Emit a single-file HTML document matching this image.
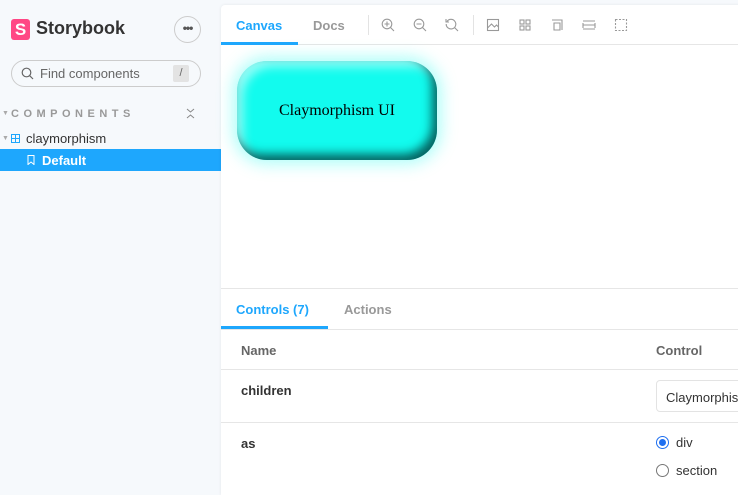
<!DOCTYPE html>
<html><head><style>
*{box-sizing:border-box;margin:0;padding:0}
body{width:738px;height:483px;overflow:hidden;background:#f6f9fc;font-family:"Liberation Sans",sans-serif;position:relative}
.abs{position:absolute}
.main{left:221px;top:5px;width:530px;height:490px;background:#fff;border-radius:4px 0 0 0;box-shadow:0 0 3px rgba(0,0,0,.08)}
.tb{height:40px;border-bottom:1px solid #e6e6e6;position:relative}
.tab{position:absolute;font-size:13px;font-weight:bold;top:13px}
.ic{position:absolute;top:13px;width:14px;height:14px}
.hr{position:absolute;left:0;width:530px;height:1px;background:#e6e6e6}
</style></head><body>
<div class="abs" style="left:11px;top:19px;width:19px;height:21px;background:#ff4785;border-radius:3px;color:#fff;font-weight:bold;font-size:17px;text-align:center;line-height:21px">S</div>
<div class="abs" style="left:36px;top:18px;font-size:18px;font-weight:bold;color:#333">Storybook</div>
<div class="abs" style="left:174px;top:16px;width:27px;height:27px;border:1px solid #ccc;border-radius:50%;text-align:center;line-height:22px;font-size:12px;font-weight:bold;color:#555;letter-spacing:-1px">•••</div>
<div class="abs" style="left:11px;top:60px;width:190px;height:27px;border:1px solid #ccc;border-radius:14px;background:#f6f9fc"></div>
<svg class="abs" style="left:21px;top:67px" width="13" height="13" viewBox="0 0 13 13"><circle cx="5.5" cy="5.5" r="4.3" fill="none" stroke="#666" stroke-width="1.2"/><path d="M8.7 8.7L12 12" stroke="#666" stroke-width="1.2"/></svg>
<div class="abs" style="left:40px;top:66px;font-size:13px;color:#666">Find components</div>
<div class="abs" style="left:173px;top:65px;width:16px;height:17px;background:#e3e3e3;border-radius:2px;font-size:11px;color:#666;text-align:center;line-height:17px">/</div>
<div class="abs" style="left:2px;top:110px;font-size:7px;color:#aaa">▼</div>
<div class="abs" style="left:11px;top:108px;font-size:11px;font-weight:bold;color:#999;letter-spacing:4.5px">COMPONENTS</div>
<svg class="abs" style="left:186px;top:108px" width="9" height="11" viewBox="0 0 9 11" fill="none" stroke="#888" stroke-width="1"><path d="M1 1l3.5 3 3.5-3M1 10l3.5-3 3.5 3"/></svg>
<div class="abs" style="left:2px;top:135px;font-size:7px;color:#aaa">▼</div>
<svg class="abs" style="left:11px;top:134px" width="9" height="9" viewBox="0 0 9 9"><rect x=".5" y=".5" width="8" height="8" fill="none" stroke="#1ea7fd"/><path d="M4.5 0V9M0 4.5H9" stroke="#1ea7fd"/></svg>
<div class="abs" style="left:26px;top:131px;font-size:13px;color:#333">claymorphism</div>
<div class="abs" style="left:0;top:149px;width:221px;height:22px;background:#1ea7fd"></div>
<svg class="abs" style="left:27px;top:155px" width="8" height="10" viewBox="0 0 8 10"><path d="M1 .5H7V9.5L4 7 1 9.5Z" fill="none" stroke="#fff"/></svg>
<div class="abs" style="left:42px;top:153px;font-size:13px;font-weight:bold;color:#fff">Default</div>
<div class="abs main">
 <div class="tb">
  <div class="tab" style="left:15px;color:#1ea7fd">Canvas</div>
  <div class="abs" style="left:0;top:37px;width:77px;height:3px;background:#1ea7fd"></div>
  <div class="tab" style="left:92px;color:#999">Docs</div>
  <div class="abs" style="left:147px;top:10px;width:1px;height:20px;background:#e3e3e3"></div>
  <div class="abs" style="left:252px;top:10px;width:1px;height:20px;background:#e3e3e3"></div>
  <svg class="ic" style="left:160px" viewBox="0 0 14 14" fill="none" stroke="#999" stroke-width="1.1"><circle cx="6" cy="6" r="4.8"/><path d="M9.5 9.5L13 13M3.5 6h5M6 3.5v5"/></svg>
  <svg class="ic" style="left:192px" viewBox="0 0 14 14" fill="none" stroke="#999" stroke-width="1.1"><circle cx="6" cy="6" r="4.8"/><path d="M9.5 9.5L13 13M3.5 6h5"/></svg>
  <svg class="ic" style="left:224px" viewBox="0 0 14 14" fill="none" stroke="#999" stroke-width="1.1"><path d="M2 3.5A4.8 4.8 0 1 1 1.2 6"/><path d="M9.5 9.5L13 13M1 1v3h3"/></svg>
  <svg class="ic" style="left:265px" viewBox="0 0 14 14" fill="none" stroke="#999" stroke-width="1.1"><rect x="1.5" y="1.5" width="11" height="11"/><path d="M1.5 10l4-4 3 3 2-2 2 2"/></svg>
  <svg class="ic" style="left:297px" viewBox="0 0 14 14" fill="none" stroke="#999" stroke-width="1.1"><rect x="2" y="2" width="4" height="4"/><rect x="8" y="2" width="4" height="4"/><rect x="2" y="8" width="4" height="4"/><rect x="8" y="8" width="4" height="4"/></svg>
  <svg class="ic" style="left:329px" viewBox="0 0 14 14" fill="none" stroke="#999" stroke-width="1.1"><path d="M2 2h10v10M4 5h6v7H4z"/></svg>
  <svg class="ic" style="left:361px" viewBox="0 0 14 14" fill="none" stroke="#999" stroke-width="1.1"><path d="M1 3h12M1 5v5M13 5v5M1 7h12M1 11h12"/></svg>
  <svg class="ic" style="left:393px" viewBox="0 0 14 14" fill="none" stroke="#999" stroke-width="1.1" stroke-dasharray="2 1.5"><rect x="1.5" y="1.5" width="11" height="11"/></svg>
 </div>
 <div class="abs" style="left:16px;top:56px;width:200px;height:99px;border-radius:30px;background:#12fbee;box-shadow:inset -5px -6px 10px rgba(0,60,60,.8),inset 6px 6px 10px rgba(255,255,255,.55),0 0 16px 4px rgba(18,251,238,.35);font-family:'Liberation Serif',serif;font-size:16px;text-align:center;line-height:99px;color:#000">Claymorphism UI</div>
 <div class="hr" style="top:283px"></div>
 <div class="tab" style="left:15px;top:297px;color:#1ea7fd">Controls (7)</div>
 <div class="abs" style="left:0;top:321px;width:107px;height:3px;background:#1ea7fd"></div>
 <div class="tab" style="left:123px;top:297px;color:#999">Actions</div>
 <div class="hr" style="top:324px"></div>
 <div class="tab" style="left:20px;top:338px;color:#666">Name</div>
 <div class="tab" style="left:435px;top:338px;color:#666">Control</div>
 <div class="hr" style="top:364px"></div>
 <div class="tab" style="left:20px;top:378px;color:#333">children</div>
 <div class="abs" style="left:435px;top:375px;width:120px;height:32px;border:1px solid #e3e3e3;border-radius:4px;font-size:13px;color:#333;padding:9px 0 0 9px;white-space:nowrap;overflow:hidden">Claymorphism UI</div>
 <div class="hr" style="top:417px"></div>
 <div class="tab" style="left:20px;top:431px;color:#333">as</div>
 <div class="abs" style="left:435px;top:431px;width:13px;height:13px;border:1px solid #1e6ff0;border-radius:50%;padding:2px"><div style="width:7px;height:7px;border-radius:50%;background:#1e6ff0"></div></div>
 <div class="abs" style="left:455px;top:430px;font-size:13px;color:#333">div</div>
 <div class="abs" style="left:435px;top:459px;width:13px;height:13px;border:1px solid #777;border-radius:50%"></div>
 <div class="abs" style="left:455px;top:458px;font-size:13px;color:#333">section</div>
</div>
</body></html>
